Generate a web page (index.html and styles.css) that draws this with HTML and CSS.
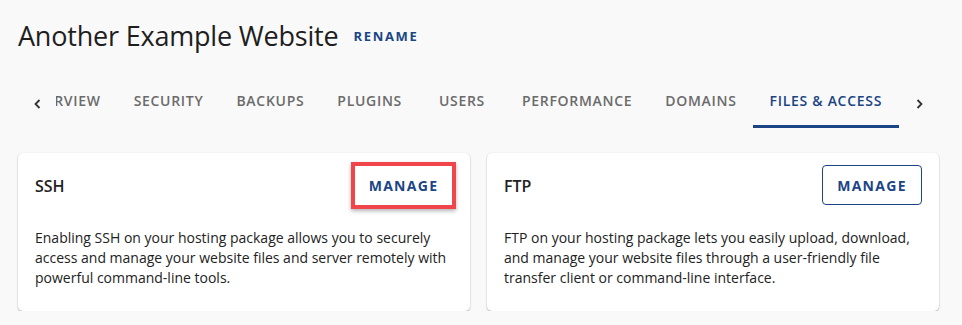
FILE: index.html
```html
<!DOCTYPE html>
<html lang="en">
<head>
<meta charset="utf-8">
<title>Another Example Website</title>
<link rel="stylesheet" href="styles.css">
</head>
<body>
<div class="page">
  <header class="site-header">
    <h1 class="site-title">Another Example Website</h1>
    <button class="link-btn">RENAME</button>
  </header>

  <nav class="tabs">
    <button class="tab-arrow" aria-label="Previous">
      <svg width="10" height="12" viewBox="0 0 10 12"><path d="M6.5 2 L2.5 6 L6.5 10" fill="none" stroke="#333" stroke-width="1.8"/></svg>
    </button>
    <div class="tab-viewport">
      <ul class="tab-list">
        <li class="tab">OVERVIEW</li>
        <li class="tab">SECURITY</li>
        <li class="tab">BACKUPS</li>
        <li class="tab">PLUGINS</li>
        <li class="tab tab-wide">USERS</li>
        <li class="tab">PERFORMANCE</li>
        <li class="tab">DOMAINS</li>
        <li class="tab active">FILES &amp; ACCESS</li>
      </ul>
    </div>
    <button class="tab-arrow" aria-label="Next">
      <svg width="10" height="12" viewBox="0 0 10 12"><path d="M3.5 2 L7.5 6 L3.5 10" fill="none" stroke="#333" stroke-width="1.8"/></svg>
    </button>
  </nav>

  <section class="cards">
    <article class="card">
      <div class="card-head">
        <h2 class="card-title">SSH</h2>
        <button class="manage-btn highlighted">MANAGE</button>
      </div>
      <p class="card-text">Enabling SSH on your hosting package allows you to securely access and manage your website files and server remotely with powerful command-line tools.</p>
    </article>
    <article class="card">
      <div class="card-head">
        <h2 class="card-title">FTP</h2>
        <button class="manage-btn outlined">MANAGE</button>
      </div>
      <p class="card-text">FTP on your hosting package lets you easily upload, download, and manage your website files through a user-friendly file transfer client or command-line interface.</p>
    </article>
  </section>
</div>
</body>
</html>
```

FILE: styles.css
```css
* { box-sizing: border-box; }
html, body {
  margin: 0;
  padding: 0;
  background: #f9f9f9;
  font-family: "Open Sans", "Noto Sans", sans-serif;
  color: #222;
}
.page {
  padding: 14px 23px 0 18px;
}
.site-header {
  display: flex;
  align-items: center;
  gap: 15px;
  height: 42px;
}
.site-title {
  margin: 0;
  font-size: 27px;
  font-weight: 400;
  color: #1e1e1e;
  letter-spacing: -0.2px;
}
.link-btn {
  border: 0;
  background: none;
  padding: 0;
  font-family: inherit;
  font-size: 13px;
  font-weight: 700;
  letter-spacing: 1.7px;
  color: #1b4584;
  margin-top: 2px;
}
.tabs {
  display: flex;
  align-items: stretch;
  margin-top: 20px;
  height: 52px;
}
.tab-arrow {
  width: 38px;
  border: 0;
  background: none;
  padding: 4px 0 0 15px;
  display: flex;
  align-items: center;
  justify-content: flex-start;
  flex: none;
}
.tab-arrow:last-child {
  padding: 4px 0 0 8px;
}
.tab-viewport {
  overflow: hidden;
  width: 850px;
  flex: none;
}
.tab-list {
  list-style: none;
  margin: 0 0 0 -48px;
  padding: 0;
  display: flex;
  height: 100%;
}
.tab {
  flex: none;
  padding: 0 16.5px;
  display: flex;
  align-items: center;
  font-size: 14px;
  font-weight: 600;
  letter-spacing: 0.7px;
  color: #6b6b6b;
  border-bottom: 3px solid transparent;
  white-space: nowrap;
}
.tab-wide { padding: 0 20.5px; }
.tab.active {
  color: #1b4584;
  border-bottom-color: #1b4584;
}
.cards {
  display: grid;
  grid-template-columns: 452px 452px;
  gap: 17px;
  margin-top: 25px;
}
.card {
  background: #fff;
  border-radius: 5px;
  box-shadow: 0 1px 2px rgba(0,0,0,0.28), 0 0 1px rgba(0,0,0,0.08);
  padding: 12px 17px 23px 17px;
}
.card-head {
  display: flex;
  align-items: center;
  justify-content: space-between;
  height: 40px;
}
.card-title {
  margin: 2px 0 0 0;
  font-size: 16px;
  font-weight: 600;
  color: #222;
}
.manage-btn {
  font-family: inherit;
  font-size: 14px;
  font-weight: 700;
  letter-spacing: 1.3px;
  color: #1b4584;
  background: #fff;
  height: 40px;
  width: 100px;
  border-radius: 4px;
  padding: 0;
}
.manage-btn.outlined {
  border: 1px solid #1b4584;
}
.manage-btn.highlighted {
  border: 4px solid #f0454b;
  border-radius: 0;
  width: 105px;
  height: 47px;
  margin-right: -3px;
  box-shadow: 0 2px 4px rgba(0,0,0,0.3);
}
.card-text {
  margin: 23px 0 0 0;
  font-size: 14px;
  line-height: 20px;
  color: #222;
}
```
